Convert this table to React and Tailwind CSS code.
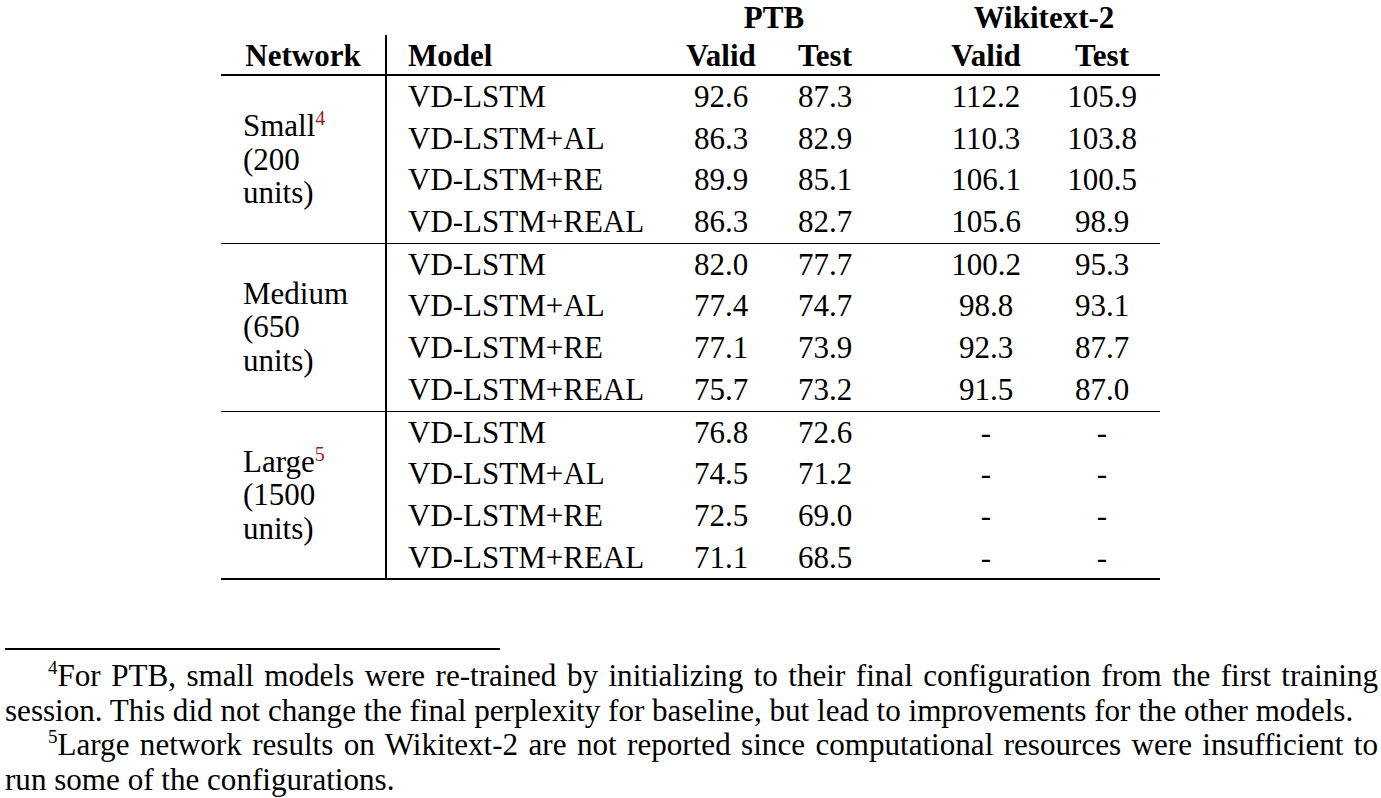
import React from 'react';

const groups = [
  {
    name: 'Small',
    note: '4',
    units: '(200',
    rows: [
      ['VD-LSTM', '92.6', '87.3', '112.2', '105.9'],
      ['VD-LSTM+AL', '86.3', '82.9', '110.3', '103.8'],
      ['VD-LSTM+RE', '89.9', '85.1', '106.1', '100.5'],
      ['VD-LSTM+REAL', '86.3', '82.7', '105.6', '98.9'],
    ],
  },
  {
    name: 'Medium',
    note: null,
    units: '(650',
    rows: [
      ['VD-LSTM', '82.0', '77.7', '100.2', '95.3'],
      ['VD-LSTM+AL', '77.4', '74.7', '98.8', '93.1'],
      ['VD-LSTM+RE', '77.1', '73.9', '92.3', '87.7'],
      ['VD-LSTM+REAL', '75.7', '73.2', '91.5', '87.0'],
    ],
  },
  {
    name: 'Large',
    note: '5',
    units: '(1500',
    rows: [
      ['VD-LSTM', '76.8', '72.6', '-', '-'],
      ['VD-LSTM+AL', '74.5', '71.2', '-', '-'],
      ['VD-LSTM+RE', '72.5', '69.0', '-', '-'],
      ['VD-LSTM+REAL', '71.1', '68.5', '-', '-'],
    ],
  },
];

const App = () => {
  return (
    <div className="w-[1381px] h-[798px] bg-white text-black overflow-hidden font-['Liberation_Serif','Times_New_Roman',serif]">
      <div className="ml-[221px] w-[939px] text-[31px]">
        {/* top header: dataset names */}
        <div className="flex h-[35px] items-end font-bold leading-[35px]">
          <div className="w-[449px]"></div>
          <div className="w-[208px] text-center">PTB</div>
          <div className="w-[50px]"></div>
          <div className="w-[232px] text-center">Wikitext-2</div>
        </div>

        {/* column header */}
        <div className="flex h-[41px] font-bold leading-[41px] border-b-2 border-black">
          <div className="w-[166px] text-center border-r-2 border-black">Network</div>
          <div className="w-[283px] pl-[21px]">Model</div>
          <div className="w-[102px] text-center">Valid</div>
          <div className="w-[106px] text-center">Test</div>
          <div className="w-[50px]"></div>
          <div className="w-[116px] text-center">Valid</div>
          <div className="w-[116px] text-center">Test</div>
        </div>

        {groups.map((g, gi) => (
          <div
            key={gi}
            className={`flex border-black ${gi === groups.length - 1 ? 'border-b-2' : 'border-b'}`}
          >
            <div className="w-[166px] border-r-2 border-black flex flex-col justify-center pl-[22px] leading-[33.5px]">
              <div>
                {g.name}
                {g.note && (
                  <sup className="text-[20px] text-[#9b1c1c] -top-[11px]">{g.note}</sup>
                )}
              </div>
              <div>{g.units}</div>
              <div>units)</div>
            </div>
            <div className="flex-1">
              {g.rows.map((r, ri) => (
                <div key={ri} className="flex h-[41.7px] leading-[41.7px]">
                  <div className="w-[283px] pl-[21px]">{r[0]}</div>
                  <div className="w-[102px] text-center">{r[1]}</div>
                  <div className="w-[106px] text-center">{r[2]}</div>
                  <div className="w-[50px]"></div>
                  <div className="w-[116px] text-center">{r[3]}</div>
                  <div className="w-[116px] text-center">{r[4]}</div>
                </div>
              ))}
            </div>
          </div>
        ))}
      </div>

      {/* footnotes */}
      <div className="mt-[68px] w-[495px] ml-[5px] h-[2px] bg-black"></div>
      <div className="ml-[5px] w-[1373px] mt-[9px] text-[31.1px] leading-[34.5px] text-justify">
        <p className="indent-[43px]">
          <sup className="text-[19px] -top-[12px]">4</sup>For PTB, small models were re-trained by initializing to their final configuration from the first training session. This did not change the final perplexity for baseline, but lead to improvements for the other models.
        </p>
        <p className="indent-[43px]">
          <sup className="text-[19px] -top-[12px]">5</sup>Large network results on Wikitext-2 are not reported since computational resources were insufficient to run some of the configurations.
        </p>
      </div>
    </div>
  );
};

export default App;
